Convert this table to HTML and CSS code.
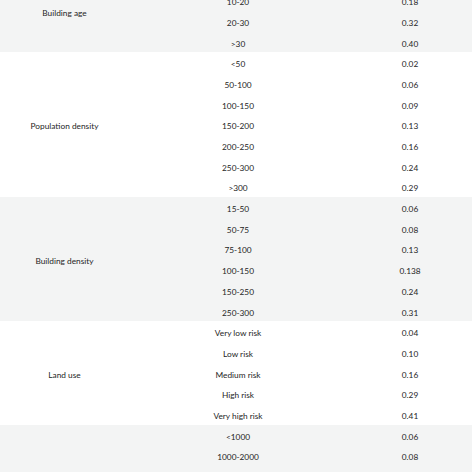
FILE: index.html
```html
<!DOCTYPE html>
<html>
<head>
<meta charset="utf-8">
<link rel="stylesheet" href="styles.css">
</head>
<body>
<div class="frame">
  <div class="table">
    <div class="group shaded">
      <div class="label">Building age</div>
      <div class="rows">
        <div class="row"><span class="cls"></span><span class="val"></span></div>
        <div class="row"><span class="cls">10-20</span><span class="val">0.18</span></div>
        <div class="row"><span class="cls">20-30</span><span class="val">0.32</span></div>
        <div class="row"><span class="cls">&gt;30</span><span class="val">0.40</span></div>
      </div>
    </div>
    <div class="group">
      <div class="label">Population density</div>
      <div class="rows">
        <div class="row"><span class="cls">&lt;50</span><span class="val">0.02</span></div>
        <div class="row"><span class="cls">50-100</span><span class="val">0.06</span></div>
        <div class="row"><span class="cls">100-150</span><span class="val">0.09</span></div>
        <div class="row"><span class="cls">150-200</span><span class="val">0.13</span></div>
        <div class="row"><span class="cls">200-250</span><span class="val">0.16</span></div>
        <div class="row"><span class="cls">250-300</span><span class="val">0.24</span></div>
        <div class="row"><span class="cls">&gt;300</span><span class="val">0.29</span></div>
      </div>
    </div>
    <div class="group shaded">
      <div class="label">Building density</div>
      <div class="rows">
        <div class="row"><span class="cls">15-50</span><span class="val">0.06</span></div>
        <div class="row"><span class="cls">50-75</span><span class="val">0.08</span></div>
        <div class="row"><span class="cls">75-100</span><span class="val">0.13</span></div>
        <div class="row"><span class="cls">100-150</span><span class="val">0.138</span></div>
        <div class="row"><span class="cls">150-250</span><span class="val">0.24</span></div>
        <div class="row"><span class="cls">250-300</span><span class="val">0.31</span></div>
      </div>
    </div>
    <div class="group">
      <div class="label">Land use</div>
      <div class="rows">
        <div class="row"><span class="cls">Very low risk</span><span class="val">0.04</span></div>
        <div class="row"><span class="cls">Low risk</span><span class="val">0.10</span></div>
        <div class="row"><span class="cls">Medium risk</span><span class="val">0.16</span></div>
        <div class="row"><span class="cls">High risk</span><span class="val">0.29</span></div>
        <div class="row"><span class="cls">Very high risk</span><span class="val">0.41</span></div>
      </div>
    </div>
    <div class="group shaded tail">
      <div class="label"></div>
      <div class="rows">
        <div class="row"><span class="cls">&lt;1000</span><span class="val">0.06</span></div>
        <div class="row"><span class="cls">1000-2000</span><span class="val">0.08</span></div>
      </div>
    </div>
  </div>
</div>
</body>
</html>
```
FILE: styles.css
```css
html, body {
  margin: 0;
  padding: 0;
  background: #ffffff;
}
.frame {
  width: 472px;
  height: 472px;
  overflow: hidden;
}
.table {
  margin-top: -30.3px;
  font-family: Lato, "Open Sans", sans-serif;
  font-size: 8.3px;
  color: #1e1e1e;
}
.group {
  display: flex;
  background: #ffffff;
}
.group.shaded {
  background: #f3f4f4;
}
.group.tail {
  padding-bottom: 80px;
}
.label {
  width: 129px;
  flex: none;
  display: flex;
  align-items: center;
  justify-content: center;
  padding-top: 3px;
  box-sizing: border-box;
}
.rows {
  display: flex;
  flex-direction: column;
}
.row {
  display: flex;
  height: 20.7px;
  align-items: center;
}
.cls {
  width: 218px;
  flex: none;
  text-align: center;
  padding-top: 3px;
}
.val {
  width: 126px;
  flex: none;
  text-align: center;
  padding-top: 3px;
}
```
